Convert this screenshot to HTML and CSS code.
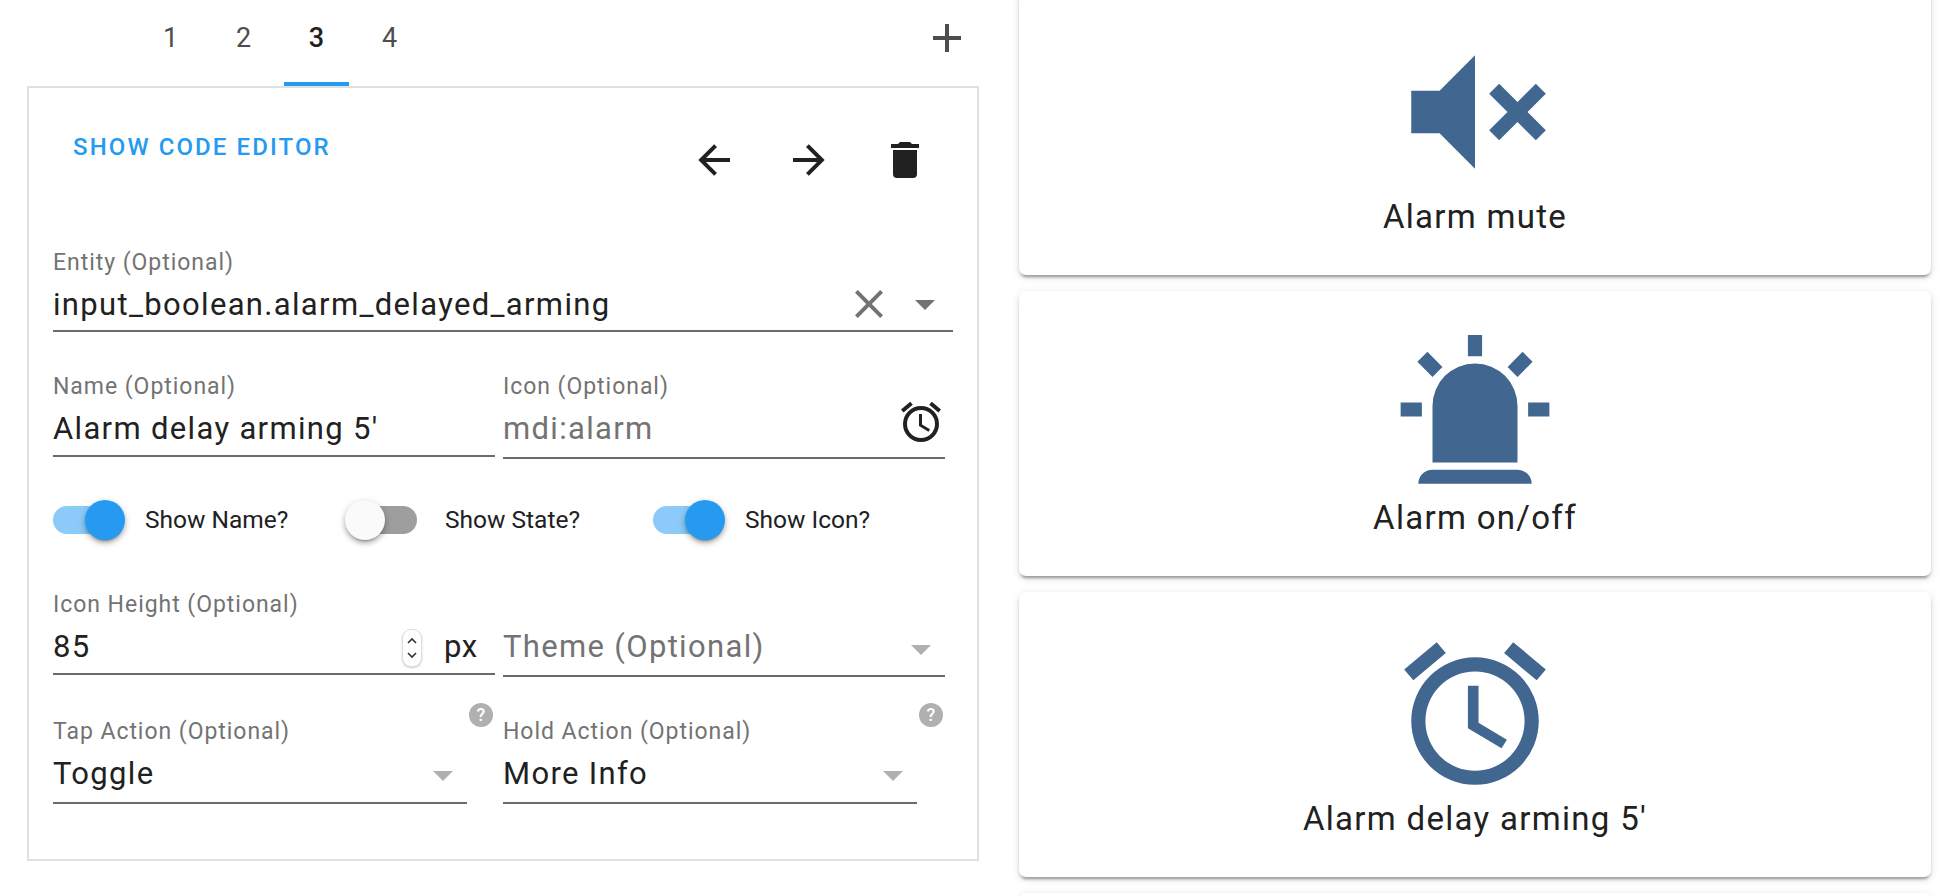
FILE: index.html
```html
<!DOCTYPE html>
<html lang="en">
<head>
    <meta charset="UTF-8">
    <meta name="viewport" content="width=device-width, initial-scale=1.0">
    <title>Entity Button Card</title>
    <link rel="stylesheet" href="styles.css">
</head>
<body>
    <div class="page">
        <div class="editor">
            <div class="tabs">
                <div class="tab">1</div>
                <div class="tab">2</div>
                <div class="tab active">3</div>
                <div class="tab">4</div>
                <svg class="icon add" viewBox="0 0 24 24"><path d="M19,13H13V19H11V13H5V11H11V5H13V11H19V13Z"/></svg>
            </div>
            <div class="panel">
                <div class="panel-head">
                    <div class="code-link">SHOW CODE EDITOR</div>
                    <div class="panel-actions">
                        <svg class="icon" viewBox="0 0 24 24"><path d="M20,11V13H8L13.5,18.5L12.08,19.92L4.16,12L12.08,4.08L13.5,5.5L8,11H20Z"/></svg>
                        <svg class="icon" viewBox="0 0 24 24"><path d="M4,11V13H16L10.5,18.5L11.92,19.92L19.84,12L11.92,4.08L10.5,5.5L16,11H4Z"/></svg>
                        <svg class="icon trash" viewBox="0 0 24 24"><path d="M19,4H15.5L14.5,3H9.5L8.5,4H5V6H19M6,19A2,2 0 0,0 8,21H16A2,2 0 0,0 18,19V7H6V19Z"/></svg>
                    </div>
                </div>

                <div class="field entity">
                    <label class="field-label">Entity (Optional)</label>
                    <div class="line">
                        <span class="value">input_boolean.alarm_delayed_arming</span>
                        <svg class="icon clear" viewBox="0 0 24 24"><path d="M19,6.41L17.59,5L12,10.59L6.41,5L5,6.41L10.59,12L5,17.59L6.41,19L12,13.41L17.59,19L19,17.59L13.41,12L19,6.41Z"/></svg>
                        <svg class="icon caret dark" viewBox="0 0 24 24"><path d="M7,10L12,15L17,10H7Z"/></svg>
                    </div>
                </div>

                <div class="two-col row-name">
                    <div class="field">
                        <label class="field-label">Name (Optional)</label>
                        <div class="line mid"><span class="value">Alarm delay arming 5'</span></div>
                    </div>
                    <div class="field">
                        <label class="field-label">Icon (Optional)</label>
                        <div class="line tall">
                            <span class="value muted">mdi:alarm</span>
                            <svg class="icon preview" viewBox="0 0 24 24"><path d="M12.5,8H11V14L15.75,16.85L16.5,15.62L12.5,13.25V8M7.88,3.39L6.6,1.86L2,5.71L3.29,7.24L7.88,3.39M22,5.72L17.4,1.86L16.11,3.39L20.71,7.25L22,5.72M12,4A9,9 0 0,0 3,13A9,9 0 0,0 12,22A9,9 0 0,0 21,13A9,9 0 0,0 12,4M12,20A7,7 0 0,1 5,13A7,7 0 0,1 12,6A7,7 0 0,1 19,13A7,7 0 0,1 12,20Z"/></svg>
                        </div>
                    </div>
                </div>

                <div class="toggles">
                    <div class="toggle first">
                        <div class="switch on"><span class="thumb"></span></div>
                        <span class="toggle-label">Show Name?</span>
                    </div>
                    <div class="toggle second">
                        <div class="switch"><span class="thumb"></span></div>
                        <span class="toggle-label wide">Show State?</span>
                    </div>
                    <div class="toggle">
                        <div class="switch on"><span class="thumb"></span></div>
                        <span class="toggle-label">Show Icon?</span>
                    </div>
                </div>

                <div class="two-col row-height">
                    <div class="field">
                        <label class="field-label">Icon Height (Optional)</label>
                        <div class="line mid">
                            <span class="value">85</span>
                            <div class="spinner">
                                <svg viewBox="0 0 18 36"><path d="M5,13L9,9L13,13M5,23L9,27L13,23"/></svg>
                            </div>
                            <span class="unit">px</span>
                        </div>
                    </div>
                    <div class="field">
                        <label class="field-label hidden">Theme</label>
                        <div class="line tall">
                            <span class="value muted">Theme (Optional)</span>
                            <svg class="icon caret theme" viewBox="0 0 24 24"><path d="M7,10L12,15L17,10H7Z"/></svg>
                        </div>
                    </div>
                </div>

                <div class="two-col row-action">
                    <div class="field short">
                        <label class="field-label">Tap Action (Optional)</label>
                        <div class="line action">
                            <span class="value">Toggle</span>
                            <svg class="icon caret" viewBox="0 0 24 24"><path d="M7,10L12,15L17,10H7Z"/></svg>
                        </div>
                        <div class="help">?</div>
                    </div>
                    <div class="field short">
                        <label class="field-label">Hold Action (Optional)</label>
                        <div class="line action">
                            <span class="value">More Info</span>
                            <svg class="icon caret" viewBox="0 0 24 24"><path d="M7,10L12,15L17,10H7Z"/></svg>
                        </div>
                        <div class="help">?</div>
                    </div>
                </div>
            </div>
        </div>

        <div class="preview-col">
            <div class="card">
                <svg class="card-icon" viewBox="0 0 24 24"><path d="M3,9H7L12,4V20L7,15H3V9M16.59,12L14,9.41L15.41,8L18,10.59L20.59,8L22,9.41L19.41,12L22,14.59L20.59,16L18,13.41L15.41,16L14,14.59L16.59,12Z"/></svg>
                <div class="card-name">Alarm mute</div>
            </div>
            <div class="card">
                <svg class="card-icon" viewBox="0 0 24 24"><path d="M6,6.9L3.87,4.78L5.28,3.37L7.4,5.5L6,6.9M13,1V4H11V1H13M20.13,4.78L18,6.9L16.6,5.5L18.72,3.37L20.13,4.78M4.5,10.5V12.5H1.5V10.5H4.5M19.5,10.5H22.5V12.5H19.5V10.5M6,20H18A2,2 0 0,1 20,22H4A2,2 0 0,1 6,20M12,5A6,6 0 0,1 18,11V19H6V11A6,6 0 0,1 12,5Z"/></svg>
                <div class="card-name">Alarm on/off</div>
            </div>
            <div class="card">
                <svg class="card-icon" viewBox="0 0 24 24"><path d="M12.5,8H11V14L15.75,16.85L16.5,15.62L12.5,13.25V8M7.88,3.39L6.6,1.86L2,5.71L3.29,7.24L7.88,3.39M22,5.72L17.4,1.86L16.11,3.39L20.71,7.25L22,5.72M12,4A9,9 0 0,0 3,13A9,9 0 0,0 12,22A9,9 0 0,0 21,13A9,9 0 0,0 12,4M12,20A7,7 0 0,1 5,13A7,7 0 0,1 12,6A7,7 0 0,1 19,13A7,7 0 0,1 12,20Z"/></svg>
                <div class="card-name">Alarm delay arming 5'</div>
            </div>
            <div class="card"></div>
        </div>
    </div>
</body>
</html>
```

FILE: styles.css
```css
html, body {
    height: 100%;
}
body {
    font-family: Roboto, "Liberation Sans", Arial, sans-serif;
    margin: 0;
    padding: 0;
    background-color: #fff;
    color: #212121;
    overflow: hidden;
}
.page {
    display: flex;
    align-items: flex-start;
    height: 896px;
    overflow: hidden;
}
.icon {
    width: 48px;
    height: 48px;
    flex: none;
    fill: #212121;
}

/* left side */
.editor {
    width: 952px;
    margin-left: 27px;
}
.tabs {
    display: flex;
    height: 86px;
    padding-left: 111px;
    padding-right: 8px;
}
.tab {
    width: 65px;
    height: 86px;
    margin-right: 8px;
    box-sizing: border-box;
    text-align: center;
    font-size: 27px;
    line-height: 76px;
    color: #4d4d4d;
}
.tab.active {
    font-weight: 500;
    color: #212121;
    border-bottom: 4px solid #259af0;
}
.add {
    margin-left: auto;
    margin-top: 14px;
    fill: #4d4d4d;
}
.panel {
    height: 775px;
    box-sizing: border-box;
    border: 2px solid #e0e0e0;
    padding: 0 24px;
}
.panel-head {
    display: flex;
    align-items: flex-start;
    padding-top: 44px;
    height: 160px;
    box-sizing: border-box;
}
.code-link {
    margin-left: 20px;
    font-size: 24px;
    line-height: 30px;
    font-weight: 500;
    letter-spacing: 2.1px;
    color: #259af0;
}
.panel-actions {
    display: flex;
    gap: 47px;
    margin-left: auto;
    margin-top: 4px;
    padding-right: 24px;
}
.trash {
    margin-left: 1px;
}

/* form fields */
.field {
    position: relative;
}
.field-label {
    display: block;
    height: 28px;
    font-size: 23px;
    line-height: 30px;
    letter-spacing: 0.96px;
    color: #737373;
}
.field-label.hidden {
    visibility: hidden;
}
.line {
    display: flex;
    align-items: flex-start;
    height: 56px;
    box-sizing: border-box;
    padding-top: 7px;
    border-bottom: 2px solid #6b6b6b;
}
.line.mid {
    height: 57px;
}
.line.tall {
    height: 59px;
}
.line.action {
    height: 59px;
}
.value {
    flex: 1;
    font-size: 31px;
    line-height: 44px;
    letter-spacing: 1.33px;
    white-space: nowrap;
}
.muted {
    color: #737373;
}
.unit {
    width: 51px;
    margin-left: 22px;
    font-size: 31px;
    line-height: 44px;
    letter-spacing: 0.6px;
}
.spinner {
    width: 18px;
    height: 36px;
    margin-top: 4px;
    border-radius: 9px;
    background-color: #fff;
    border: 1px solid #ddd;
    box-shadow: 0 1px 2px rgba(0, 0, 0, 0.2);
}
.spinner svg {
    display: block;
    width: 18px;
    height: 36px;
}
.spinner path {
    fill: none;
    stroke: #333;
    stroke-width: 1.6;
}
.clear {
    margin-top: -3px;
    margin-right: 8px;
    fill: #737373;
}
.caret {
    margin-top: -1px;
    fill: #b0b0b0;
}
.caret.dark {
    margin-top: -3px;
    margin-right: 4px;
    fill: #737373;
}
.caret.theme {
    margin-top: 0;
}
.preview {
    margin-top: -9px;
}
.two-col {
    display: grid;
    grid-template-columns: 442px 442px;
    column-gap: 8px;
}
.short {
    width: 414px;
}
.row-name {
    margin-top: 40px;
}
.row-height {
    margin-top: 50px;
}
.row-action {
    margin-top: 40px;
    grid-template-columns: 450px 414px;
    column-gap: 0;
}
.help {
    position: absolute;
    left: 416px;
    top: -14px;
    width: 24px;
    height: 24px;
    border-radius: 50%;
    background-color: #b0b0b0;
    color: #fff;
    font-size: 18px;
    font-weight: 500;
    line-height: 24px;
    text-align: center;
}

/* toggles */
.toggles {
    display: flex;
    margin-top: 41px;
    height: 40px;
}
.toggle {
    display: flex;
    align-items: center;
}
.toggle.first {
    width: 292px;
}
.toggle.second {
    width: 308px;
}
.switch {
    position: relative;
    width: 72px;
    height: 40px;
    flex: none;
}
.switch::before {
    content: "";
    position: absolute;
    top: 6px;
    left: 6px;
    right: 0;
    height: 28px;
    border-radius: 14px;
    background-color: #9e9e9e;
}
.switch.on::before {
    left: 0;
    right: 6px;
    background-color: #8ccaf9;
}
.thumb {
    position: absolute;
    top: 0;
    left: 0;
    width: 40px;
    height: 40px;
    border-radius: 50%;
    background-color: #fafafa;
    box-shadow: 0 3px 2px -2px rgba(0, 0, 0, 0.25), 0 3px 5px rgba(0, 0, 0, 0.25), 0 2px 8px rgba(0, 0, 0, 0.12);
}
.switch.on .thumb {
    left: 32px;
    background-color: #259af0;
}
.toggle-label {
    margin-left: 20px;
    font-size: 24.5px;
    line-height: 40px;
    white-space: nowrap;
    color: #212121;
}
.toggle-label.wide {
    margin-left: 28px;
}

/* button cards */
.preview-col {
    width: 912px;
    margin-left: 40px;
    margin-top: -10px;
    flex: none;
}
.card {
    height: 285px;
    margin-bottom: 16px;
    box-sizing: border-box;
    padding-top: 37px;
    border-radius: 7px;
    background-color: #fff;
    text-align: center;
    box-shadow: 0 3px 3px 0 rgba(0, 0, 0, 0.14), 0 2px 8px 0 rgba(0, 0, 0, 0.12), 0 5px 2px -3px rgba(0, 0, 0, 0.2);
}
.card-icon {
    display: block;
    width: 170px;
    height: 170px;
    margin: 0 auto;
    fill: #416690;
}
.card-name {
    margin-top: 3px;
    font-size: 33px;
    line-height: 34px;
    letter-spacing: 1.3px;
    color: #212121;
}
```
